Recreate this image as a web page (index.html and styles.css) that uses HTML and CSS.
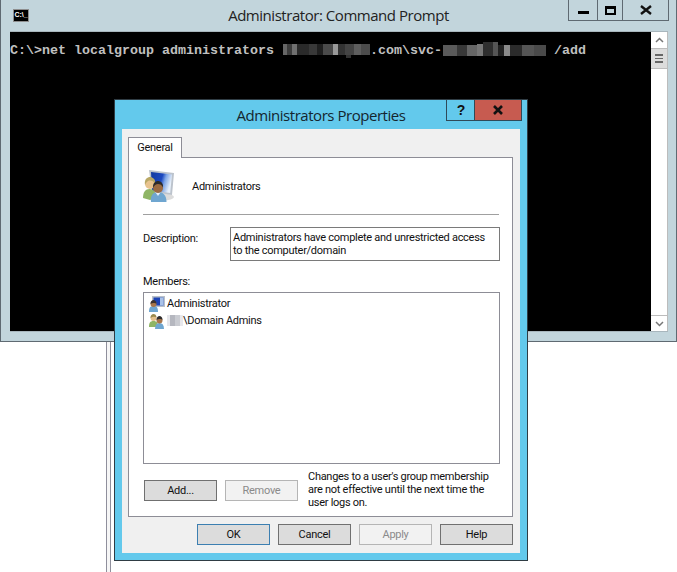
FILE: index.html
```html
<!DOCTYPE html>
<html lang="en">
<head>
<meta charset="utf-8">
<title>Administrators Properties</title>
<link rel="stylesheet" href="styles.css">
</head>
<body>
<div class="backwin"></div>

<section class="cmd">
  <header class="cmd-bar">
    <div class="cmd-icon"><span>C:\_</span></div>
    <div class="cmd-title">Administrator: Command Prompt</div>
    <div class="cmd-caption">
      <div class="cap cap-min"><i></i></div>
      <div class="cap cap-max"><i></i></div>
      <div class="cap cap-close">
        <svg width="14" height="10" viewBox="0 0 14 10"><path d="M2 1l10 8M12 1L2 9" stroke="#111" stroke-width="2.4" fill="none"/></svg>
      </div>
    </div>
  </header>
  <div class="cmd-body">
    <div class="console">
      <span class="console-text">C:\&gt;net localgroup administrators </span><svg class="blur" width="88" height="18" viewBox="0 0 88 18" shape-rendering="crispEdges">
        <rect x="1" y="3" width="87" height="11" fill="#333"/>
        <rect x="1" y="3" width="4" height="11" fill="#666"/><rect x="5" y="3" width="5" height="11" fill="#3c3c3c"/><rect x="10" y="3" width="5" height="11" fill="#707070"/>
        <rect x="15" y="3" width="12" height="11" fill="#2a2a2a"/><rect x="27" y="3" width="8" height="11" fill="#383838"/><rect x="35" y="3" width="6" height="11" fill="#1f1f1f"/>
        <rect x="41" y="3" width="10" height="11" fill="#4a4a4a"/><rect x="51" y="3" width="5" height="11" fill="#999"/><rect x="56" y="3" width="7" height="11" fill="#333"/>
        <rect x="63" y="3" width="9" height="11" fill="#444"/><rect x="72" y="3" width="7" height="11" fill="#5e5e5e"/><rect x="79" y="3" width="9" height="11" fill="#4c4c4c"/>
        <rect x="64" y="14" width="5" height="3" fill="#333"/>
      </svg><span class="console-text">.com\svc-</span><svg class="blur" width="104" height="18" viewBox="0 0 104 18" shape-rendering="crispEdges">
        <rect x="1" y="4" width="103" height="11" fill="#3a3a3a"/>
        <rect x="1" y="4" width="14" height="11" fill="#5a5a5a"/><rect x="15" y="4" width="10" height="11" fill="#383838"/><rect x="25" y="4" width="10" height="11" fill="#666"/>
        <rect x="35" y="3" width="6" height="12" fill="#777"/><rect x="41" y="1" width="10" height="14" fill="#2e2e2e"/><rect x="51" y="1" width="5" height="14" fill="#555"/>
        <rect x="56" y="4" width="6" height="11" fill="#222"/><rect x="62" y="4" width="6" height="11" fill="#8a8a8a"/><rect x="68" y="4" width="12" height="11" fill="#2b2b2b"/>
        <rect x="80" y="4" width="12" height="11" fill="#555"/><rect x="92" y="4" width="12" height="11" fill="#4a4a4a"/>
      </svg><span class="console-text console-end">/add</span>
    </div>
    <div class="scrollbar">
      <div class="sb-arrow sb-up"><svg width="9" height="6" viewBox="0 0 9 6"><path d="M1 5l3.500-3.500L8 5" stroke="#777" stroke-width="1.500" fill="none"/></svg></div>
      <div class="sb-thumb"><i></i><i></i><i></i></div>
      <div class="sb-track"></div>
      <div class="sb-arrow sb-down"><svg width="9" height="6" viewBox="0 0 9 6"><path d="M1 1l3.500 3.500L8 1" stroke="#777" stroke-width="1.500" fill="none"/></svg></div>
    </div>
  </div>
</section>

<section class="dialog">
  <header class="dlg-bar">
    <div class="dlg-title">Administrators Properties</div>
    <div class="dlg-caption">
      <div class="dcap dcap-help">?</div>
      <div class="dcap dcap-close">
        <svg width="14" height="10" viewBox="0 0 14 10"><path d="M3 1l8 8M11 1L3 9" stroke="#111" stroke-width="2.600" fill="none"/></svg>
      </div>
    </div>
  </header>
  <div class="client">
    <div class="tabs"><div class="tab">General</div></div>
    <div class="panel">
      <div class="head-row">
        <svg class="big-icon" width="32" height="32" viewBox="0 0 32 32">
          <defs>
            <linearGradient id="screen" x1="0" y1="0" x2="1" y2="0.300">
              <stop offset="0" stop-color="#123a9e"/>
              <stop offset="0.550" stop-color="#1d49c0"/>
              <stop offset="0.720" stop-color="#7fa6e6"/>
              <stop offset="1" stop-color="#e6effa"/>
            </linearGradient>
          </defs>
          <ellipse cx="20" cy="27" rx="11" ry="3.500" fill="#dcdcdc"/>
          <path d="M6 0l25 3-2 22-20-3z" fill="#bcc3cc"/>
          <path d="M8 2l21 2.600-1.800 18.400L9 20.500z" fill="url(#screen)"/>
          <path d="M0 28c0-6 2.500-9 6.500-9s6.500 3 6.500 9l-6 2z" fill="#8fb565"/>
          <circle cx="7" cy="14" r="5" fill="#e8c38f"/>
          <path d="M2 15c-1-6 2.500-8 5-8s6 2 5 7c-1-3-4-4-6-3.500-2 .5-3 2.500-4 4.500z" fill="#b9a866"/>
          <path d="M8 32c-1-6 2-10 7-10s8.500 3 8.500 10z" fill="#6fa6d0"/>
          <path d="M12.500 22.500l2.500 3.500 2.500-3.500z" fill="#e6eef5"/>
          <circle cx="15" cy="18" r="5" fill="#9c6b42"/>
          <path d="M10 18c-.5-5 2.500-7 5-7s5.500 2 5 6.500c-1-2.500-3-3.500-5-3.500s-4 1.500-5 4z" fill="#2c2a2b"/>
        </svg>
        <div class="group-name">Administrators</div>
      </div>
      <div class="rule"></div>
      <div class="desc-row">
        <div class="desc-label">Description:</div>
        <div class="desc-box">Administrators have complete and unrestricted access to the computer/domain</div>
      </div>
      <div class="members-label">Members:</div>
      <div class="members">
        <div class="member">
          <svg class="sm-icon" width="16" height="16" viewBox="0 0 16 16">
            <path d="M3 0h13v11H3z" fill="#b9c0c9"/>
            <path d="M4.500 1.500h10v8h-10z" fill="#1d43b5"/>
            <path d="M11 1.500h3.500v8H11z" fill="#a9c2e8"/>
            <path d="M0 16c0-4 1-6 4.500-6S9 12 9 16z" fill="#6fa6d0"/>
            <circle cx="4.500" cy="8" r="3" fill="#a9764a"/>
            <path d="M1.500 8c0-3 1.500-4 3-4s3 1 3 4c-1-1-4-1.500-6 0z" fill="#3a3230"/>
          </svg>
          <span>Administrator</span>
        </div>
        <div class="member">
          <svg class="sm-icon" width="16" height="16" viewBox="0 0 16 16">
            <path d="M0 14c0-4 1-6 4.500-6S9 10 9 14z" fill="#8fb565"/>
            <circle cx="4.500" cy="5" r="3" fill="#e4bf8b"/>
            <path d="M1.500 5c0-3 1.500-4 3-4s3 1 3 3.500C6 3.500 4 3 1.500 5z" fill="#9a8a4e"/>
            <path d="M6 16c0-4 1.500-6 4.500-6s4.500 2 4.500 6z" fill="#6fa6d0"/>
            <circle cx="10.500" cy="7.500" r="3" fill="#a9764a"/>
            <path d="M7.500 7c0-3 1.500-4 3-4s3 1 3 4c-1-1-4-1.500-6 0z" fill="#2f2b2a"/>
          </svg>
          <svg class="sm-blur" width="16" height="11" viewBox="0 0 16 11" shape-rendering="crispEdges">
            <rect x="0" y="0" width="3" height="11" fill="#e6e6ea"/>
            <rect x="3" y="0" width="5" height="11" fill="#b5b7bf"/>
            <rect x="8" y="0" width="5" height="11" fill="#c9cbd1"/>
            <rect x="13" y="0" width="3" height="11" fill="#e8e8ec"/>
          </svg>
          <span>\Domain Admins</span>
        </div>
      </div>
      <div class="actions">
        <div class="btn btn-add">Add...</div>
        <div class="btn btn-off btn-remove">Remove</div>
        <p class="note">Changes to a user's group membership are not effective until the next time the user logs on.</p>
      </div>
    </div>
    <footer class="footer">
      <div class="btn btn-default">OK</div>
      <div class="btn">Cancel</div>
      <div class="btn btn-off">Apply</div>
      <div class="btn">Help</div>
    </footer>
  </div>
</section>
</body>
</html>
```

FILE: styles.css
```css
* { box-sizing: border-box; }
html, body { margin: 0; padding: 0; }
body {
  position: relative;
  width: 677px;
  height: 572px;
  overflow: hidden;
  background: #fff;
  font-family: Roboto, "Open Sans", sans-serif;
  font-size: 11px;
  letter-spacing: -0.28px;
  color: #111;
}

/* Windows on the desktop */
.backwin {
  position: absolute;
  left: 106px;
  top: 330px;
  width: 5px;
  height: 242px;
  border-left: 1px solid #8f8f9c;
  border-right: 1px solid #8f8f9c;
  background: #f6f6f6;
}
.cmd {
  position: absolute;
  left: 0;
  top: 0;
  width: 677px;
  height: 342px;
  background: #c2d5dc;
  border: 1px solid #5f6a72;
  border-top: 0;
  display: flex;
  flex-direction: column;
}
.dialog {
  position: absolute;
  left: 114px;
  top: 99px;
  width: 414px;
  height: 462px;
  background: #63c9ec;
  border: 1px solid #2f3c44;
  padding: 0 7px 7px;
  display: flex;
  flex-direction: column;
}

/* Command prompt */
.cmd-bar {
  height: 31px;
  display: grid;
  grid-template-columns: 1fr auto 1fr;
  padding: 0 7px;
}
.cmd-icon {
  width: 16px;
  height: 13px;
  margin: 9px 0 0 5px;
  background: #000;
  border: 1px solid #8e8e8e;
  color: #fff;
  font: bold 7px/10px "Liberation Sans", sans-serif;
  letter-spacing: 0;
  text-align: center;
  overflow: hidden;
}
.cmd-title {
  font-family: "Open Sans", sans-serif;
  font-size: 15px;
  letter-spacing: -0.46px;
  line-height: 31px;
  color: #222;
}
.cmd-caption {
  justify-self: end;
  display: flex;
  height: 21px;
  border: 1px solid #5f6a72;
  border-top: 0;
}
.cap {
  display: flex;
  align-items: center;
  justify-content: center;
}
.cap + .cap { border-left: 1px solid #5f6a72; }
.cap-min { width: 28px; }
.cap-max { width: 25px; }
.cap-close { width: 46px; }
.cap-min i { width: 11px; height: 3px; margin-top: 5px; background: #000; }
.cap-max i { width: 11px; height: 9px; border: 2px solid #000; border-top-width: 3px; }

.cmd-body {
  display: flex;
  width: 658px;
  height: 301px;
  margin-left: 9px;
  border-top: 1px solid #a8b6bd;
  border-bottom: 1px solid #a8b6bd;
}
.console {
  width: 641px;
  background: #000;
  color: #c0c0c0;
  font: bold 13.33px/16px "Liberation Mono", monospace;
  letter-spacing: 0;
  white-space: pre;
  padding-top: 9px;
  display: flex;
  align-items: flex-start;
}
.console-text { margin-top: 2px; }
.blur { display: block; }
.console-end { margin-left: 8px; }
.scrollbar {
  width: 17px;
  background: #fff;
  border-right: 1px solid #bcbcbc;
  display: flex;
  flex-direction: column;
}
.sb-arrow {
  height: 16px;
  display: flex;
  align-items: center;
  justify-content: center;
}
.sb-thumb {
  height: 21px;
  background: #dcdcdc;
  border-top: 1px solid #bcbcbc;
  border-bottom: 1px solid #bcbcbc;
  display: flex;
  flex-direction: column;
  align-items: center;
  justify-content: center;
  gap: 2px;
}
.sb-thumb i { width: 8px; height: 1.5px; background: #666; }
.sb-track { flex: 1; }
.sb-down { border-top: 1px solid #bcbcbc; }

/* Dialog */
.dlg-bar {
  height: 29px;
  margin: 0 -2px;
  display: grid;
  grid-template-columns: 1fr auto 1fr;
}
.dlg-title {
  grid-column: 2;
  font-family: "Open Sans", sans-serif;
  font-size: 15px;
  letter-spacing: -0.46px;
  line-height: 30px;
  color: #14262f;
  white-space: nowrap;
}
.dlg-caption {
  justify-self: end;
  display: flex;
  height: 21px;
  border: 1px solid #2f4a59;
  border-top: 0;
}
.dcap {
  display: flex;
  align-items: center;
  justify-content: center;
}
.dcap-help {
  width: 28px;
  padding-left: 1px;
  border-right: 1px solid #2f4a59;
  font: bold 14px/18px "Liberation Sans", sans-serif;
  letter-spacing: 0;
  color: #111;
}
.dcap-close { width: 46px; background: #c75b50; }

.client {
  flex: 1;
  background: #f0f0f0;
  padding: 8px 7px 0 6px;
  display: flex;
  flex-direction: column;
}
.tabs { height: 20px; display: flex; }
.tab {
  width: 54px;
  height: 21px;
  background: #fff;
  border: 1px solid #8d8d96;
  border-bottom: 0;
  text-align: center;
  line-height: 20px;
  position: relative;
  z-index: 1;
  color: #111;
}
.panel {
  height: 360px;
  background: #fff;
  border: 1px solid #8d8d96;
  padding: 12px 0 0 14px;
}
.head-row { display: flex; align-items: center; height: 32px; }
.big-icon { display: block; }
.group-name { margin-left: 17px; }
.rule {
  margin-top: 12px;
  width: 356px;
  height: 1px;
  background: #a0a0a0;
}
.desc-row { display: flex; margin-top: 12px; }
.desc-label { width: 87px; line-height: 24px; }
.desc-box {
  width: 270px;
  height: 34px;
  border: 1px solid #7a7a7a;
  padding: 3px 8px 2px 2px;
  line-height: 13px;
}
.members-label { margin-top: 13px; line-height: 16px; }
.members {
  margin-top: 2px;
  width: 357px;
  height: 172px;
  border: 1px solid #8d8d96;
  padding: 2px 5px;
}
.member {
  display: flex;
  align-items: center;
  height: 17px;
  white-space: nowrap;
}
.sm-icon { display: block; margin-right: 2px; }
.sm-blur { display: block; }
.actions { display: flex; margin-top: 6px; padding-left: 1px; }
.btn {
  width: 73px;
  height: 21px;
  background: #dcdcdc;
  border: 1px solid #707070;
  text-align: center;
  line-height: 20px;
  color: #111;
}
.btn-off {
  background: #f2f2f2;
  border-color: #b5b5b5;
  color: #8a8a8a;
}
.btn-default { border-color: #3c7fb1; }
.btn-add, .btn-remove { margin-top: 10px; }
.btn-remove { margin-left: 8px; }
.note {
  margin: 0 0 0 10px;
  width: 192px;
  line-height: 13px;
}
.footer {
  display: flex;
  justify-content: flex-end;
  gap: 8px;
  padding-top: 7px;
}
```
